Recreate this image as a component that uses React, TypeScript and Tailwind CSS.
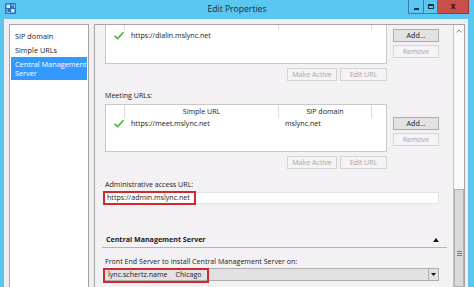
import * as React from "react"

const Check = () => (
  <svg width="10" height="8" viewBox="0 0 10 8" className="block">
    <path d="M1 4.2 L3.6 6.8 L9 0.8" fill="none" stroke="#4eae45" strokeWidth="1.6" strokeLinecap="round" strokeLinejoin="round" />
  </svg>
)

const Btn = ({ label, disabled, className = "" }: { label: string; disabled?: boolean; className?: string }) => (
  <div
    className={
      "h-[13px] flex items-center justify-center border " +
      (disabled ? "border-[#d4d4d4] bg-[#f5f3f5] text-[#a8a8a8] " : "border-[#acacac] bg-[#e2e2e2] text-[#1e1e1e] ") +
      className
    }
  >
    {label}
  </div>
)

function UrlList({ rows, showHeaderText }: { rows: { url: string; sip: string }[]; showHeaderText: boolean }) {
  return (
    <div className="w-[282px] h-[48px] border border-[#c8c8c8] bg-white">
      <div className="grid grid-cols-[19px_154px_93px_1fr] h-[13px]">
        <div className="border-r border-[#dcdcdc]" />
        <div className="border-r border-[#dcdcdc] flex items-center justify-center">{showHeaderText ? "Simple URL" : ""}</div>
        <div className="border-r border-[#dcdcdc] flex items-center justify-center">{showHeaderText ? "SIP domain" : ""}</div>
        <div />
      </div>
      {rows.map((r) => (
        <div key={r.url} className="grid grid-cols-[19px_154px_93px_1fr] h-[12px] items-center">
          <div className="flex justify-end pr-[1px]">
            <Check />
          </div>
          <div className="pl-[6px]">{r.url}</div>
          <div className="pl-[6px]">{r.sip}</div>
          <div />
        </div>
      ))}
    </div>
  )
}

function UrlSection({ rows, showHeaderText }: { rows: { url: string; sip: string }[]; showHeaderText: boolean }) {
  return (
    <div className="flex flex-col">
      <div className="flex">
        <UrlList rows={rows} showHeaderText={showHeaderText} />
        <div className="ml-[6px] mt-[13px] w-[46px] flex flex-col gap-[3px]">
          <Btn label="Add..." />
          <Btn label="Remove" disabled />
        </div>
      </div>
      <div className="mt-[4px] w-[282px] flex justify-end gap-[3px]">
        <Btn label="Make Active" disabled className="w-[50px]" />
        <Btn label="Edit URL" disabled className="w-[47px]" />
      </div>
    </div>
  )
}

export default function App() {
  return (
    <div className="w-[474px] h-[287px] overflow-hidden bg-[#5bc6ef] flex flex-col font-['Segoe_UI','Open_Sans',sans-serif] text-[7.1px] leading-none text-[#1a1a1a]">
      {/* title bar */}
      <div className="h-[19px] shrink-0 grid grid-cols-[1fr_auto_1fr]">
        <div className="pl-[5px] pt-[3px]">
          <svg width="11" height="11" viewBox="0 0 11 11" className="block">
            <rect x="0" y="0" width="11" height="11" rx="1.5" fill="#2e6fb7" />
            <rect x="1.5" y="1.5" width="3.5" height="3.5" fill="#cfe6ff" />
            <rect x="6" y="6" width="3.5" height="3.5" fill="#cfe6ff" />
            <path d="M6 2 L9.5 2 L9.5 5 M2 6 L2 9.5 L5 9.5" stroke="#9ecbff" strokeWidth="1" fill="none" />
          </svg>
        </div>
        <div className="text-[8.6px] leading-[19px] text-[#1a2a33]">Edit Properties</div>
        <div className="flex justify-end pr-[5px]">
          <div className="w-[16px] h-[14px] border border-[#3a7fa3] border-t-0 flex items-end justify-center pb-[3px]">
            <div className="w-[5px] h-[2px] bg-[#15323f]" />
          </div>
          <div className="w-[14px] h-[14px] border-b border-r border-[#3a7fa3] flex items-center justify-center">
            <div className="w-[6px] h-[5px] border border-t-2 border-[#15323f]" />
          </div>
          <div className="w-[31px] h-[14px] bg-[#c9504a] border-b border-r border-[#8e3a35] flex items-center justify-center text-[8px] font-bold text-[#3a1212] font-['DejaVu_Sans',sans-serif]">
            x
          </div>
        </div>
      </div>

      {/* body */}
      <div className="flex-1 min-h-0 ml-[4px] mr-[6px] bg-[#f0eef0] pt-[5px] pl-[5px] flex">
        {/* nav */}
        <div className="w-[80px] border border-b-0 border-[#a4a4a4] bg-white pt-[5px] px-[1px] text-[7.3px]">
          <div className="h-[14px] flex items-center pl-[4px]">SIP domain</div>
          <div className="h-[13px] flex items-center pl-[4px]">Simple URLs</div>
          <div className="h-[23px] bg-[#3399ff] text-white pl-[4px] pt-[2.5px] leading-[9px]">
            Central Management
            <br />
            Server
          </div>
        </div>

        {/* properties panel */}
        <div className="ml-[5px] w-[371px] border border-b-0 border-[#a4a4a4] bg-[#f4f1f4] flex">
          <div className="flex-1 overflow-hidden">
            <div className="-mt-[9px] pl-[10px] flex flex-col">
              <UrlSection rows={[{ url: "https://dialin.mslync.net", sip: "" }]} showHeaderText={false} />

              <div className="mt-[10px] h-[10px] flex items-center">Meeting URLs:</div>
              <div className="mt-[3px]">
                <UrlSection rows={[{ url: "https://meet.mslync.net", sip: "mslync.net" }]} showHeaderText />
              </div>

              <div className="mt-[11px] h-[10px] flex items-center">Administrative access URL:</div>
              <div className="relative -ml-[2px] mt-[1px] w-[336px] h-[14px] py-[1px]">
                <div className="h-[12px] bg-white border border-[#e4e4e4] flex items-center pl-[3px]">https://admin.mslync.net</div>
                <div className="absolute left-0 top-0 w-[93px] h-[14px] border-2 border-[#cf2a2f]" />
              </div>

              <div className="-ml-[3px] mt-[30px] w-[345px] h-[13px] border-b border-[#b4b4b4] flex items-start justify-between pl-[4px] pr-[8px]">
                <div className="font-bold h-[10px] flex items-center">Central Management Server</div>
                <svg width="6" height="4" viewBox="0 0 6 4" className="mt-[3px]">
                  <path d="M0 4 L3 0 L6 4 Z" fill="#111" />
                </svg>
              </div>

              <div className="mt-[9px] h-[10px] flex items-center">Front End Server to install Central Management Server on:</div>
              <div className="relative -ml-[2px] mt-[1px] w-[336px] h-[15px]">
                <div className="h-[13px] bg-[#e3e1e3] border border-[#adadad] flex">
                  <div className="flex-1 flex items-center pl-[4px]">
                    <span>lync.schertz.name</span>
                    <span className="ml-[8px]">Chicago</span>
                  </div>
                  <div className="w-[10px] border-l border-[#adadad] flex items-center justify-center">
                    <svg width="5" height="3" viewBox="0 0 5 3">
                      <path d="M0 0 L5 0 L2.5 3 Z" fill="#111" />
                    </svg>
                  </div>
                </div>
                <div className="absolute left-0 top-0 w-[106px] h-[15px] border-2 border-[#cf2a2f]" />
              </div>
            </div>
          </div>

          {/* scrollbar */}
          <div className="w-[11px] border-l border-[#c4c4c4] bg-[#fbfafb] flex flex-col">
            <div className="h-[12px] flex items-center justify-center">
              <svg width="6" height="4" viewBox="0 0 6 4">
                <path d="M0.5 3.5 L3 1 L5.5 3.5" fill="none" stroke="#8a8a8a" strokeWidth="1" />
              </svg>
            </div>
            <div className="h-[152px]" />
            <div className="flex-1 bg-[#d9d9d9] border border-[#b0b0b0] flex flex-col items-center pt-[61px] gap-[1px]">
              <div className="w-[5px] h-px bg-[#7a7a7a]" />
              <div className="w-[5px] h-px bg-[#7a7a7a]" />
              <div className="w-[5px] h-px bg-[#7a7a7a]" />
            </div>
          </div>
        </div>
      </div>
    </div>
  )
}
